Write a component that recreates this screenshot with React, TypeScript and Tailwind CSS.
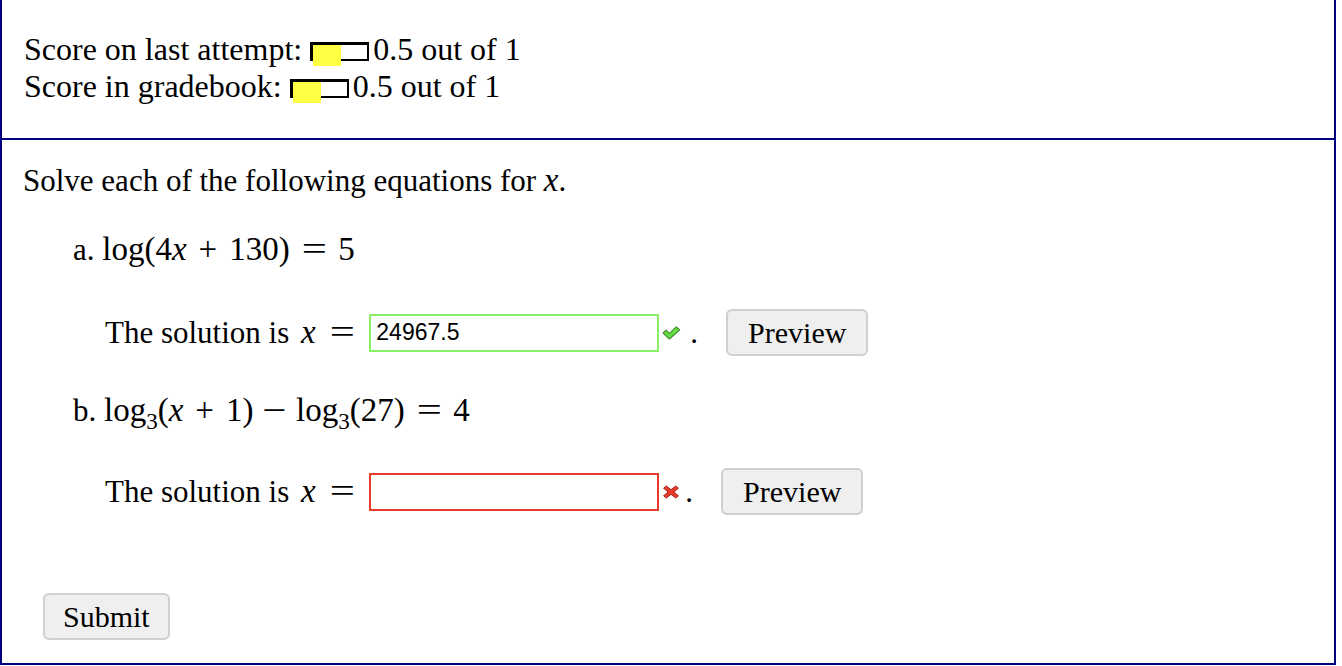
import React from "react"

function ScoreBar() {
  return (
    <span className="relative ml-[0px] mr-[4px] inline-block h-[19px] w-[59px] translate-y-[1px] border-2 border-black border-t-[3px] border-l-[3px] align-baseline">
      <span className="absolute left-0 top-0 h-[21px] w-[28px] bg-[#ffff44]" />
    </span>
  )
}

function CheckIcon() {
  return (
    <svg width="19" height="14" viewBox="0 0 18 13" className="inline-block">
      <path
        d="M1 6.5 L4 3.8 L7 6.8 L13.5 0.8 L16.8 3.6 L7 12.2 Z"
        fill="#66dd44"
        stroke="#3c8a2a"
        strokeWidth="1"
        strokeLinejoin="round"
      />
    </svg>
  )
}

function CrossIcon() {
  return (
    <svg width="18" height="14" viewBox="0 0 17 13" className="inline-block">
      <path
        d="M1.5 3 L4 0.8 L8.5 4.3 L13 0.8 L15.5 3 L11.2 6.5 L15.5 10 L13 12.2 L8.5 8.7 L4 12.2 L1.5 10 L5.8 6.5 Z"
        fill="#e83a2a"
        stroke="#9a2418"
        strokeWidth="0.9"
        strokeLinejoin="round"
      />
    </svg>
  )
}

function X() {
  return <span className="italic">x</span>
}

function Sub3() {
  return <span className="relative top-[8px] text-[23px]">3</span>
}

function AnswerRow({ value, ok }: { value: string; ok: boolean }) {
  return (
    <div className="flex items-center pl-[103px]">
      <span>
        The solution is{" "}
        <span className="ml-[4px] text-[33px]">
          <X />
        </span>
        <span className="ml-[17px] inline-block scale-x-[1.35] text-[33px]">=</span>
      </span>
      <input
        readOnly
        value={value}
        className={`ml-[18px] h-[38px] w-[290px] border-2 px-[5px] text-[23px] text-black outline-none ${
          ok ? "border-[#88ee66]" : "border-[#e8392b]"
        }`}
        style={{ fontFamily: '"Liberation Sans", Arial, sans-serif' }}
      />
      <span className="ml-[3px] flex items-center">{ok ? <CheckIcon /> : <CrossIcon />}</span>
      <span className={ok ? "ml-[9px]" : "ml-[5px]"}>.</span>
      <button className="ml-[28px] h-[47px] rounded-[6px] border-2 border-[#cfcfcf] bg-[#efefef] px-[20px] text-[30px] text-black">
        Preview
      </button>
    </div>
  )
}

export default function App() {
  return (
    <div
      className="h-[665px] w-[1336px] border-x-2 border-b-2 border-[#000080] bg-white text-[31px] text-black"
      style={{ fontFamily: '"Liberation Serif", "Times New Roman", serif' }}
    >
      <div className="h-[138px] pl-[22px] pt-[31px] text-[32px] leading-[37px]">
        <div>
          Score on last attempt:{" "}
          <ScoreBar />
          0.5 out of 1
        </div>
        <div>
          Score in gradebook:{" "}
          <ScoreBar />
          0.5 out of 1
        </div>
      </div>

      <div className="border-t-2 border-[#000080] leading-[36px]">
        <p className="pl-[21px] pt-[22px]">
          Solve each of the following equations for{" "}
          <span className="text-[33px]">
            <X />
          </span>
          .
        </p>

        <p className="pl-[71px] pt-[32px]">
          a. <span className="text-[33px]">
            log(4<X />
            <span className="mx-[12px]">+</span>130)
            <span className="mx-[15px] inline-block scale-x-[1.35]">=</span>5
          </span>
        </p>

        <div className="pt-[41px]">
          <AnswerRow value="24967.5" ok />
        </div>

        <p className="pl-[71px] pt-[36px]">
          b. <span className="text-[33px]">
            log<Sub3 />(<X />
            <span className="mx-[12px]">+</span>1)
            <span className="mx-[12px] inline-block scale-x-[1.3]">−</span>log<Sub3 />(27)
            <span className="mx-[15px] inline-block scale-x-[1.35]">=</span>4
          </span>
        </p>

        <div className="pt-[36px]">
          <AnswerRow value="" ok={false} />
        </div>

        <div className="pl-[41px] pt-[78px]">
          <button className="h-[47px] rounded-[6px] border-2 border-[#cfcfcf] bg-[#efefef] px-[18px] text-[30px] text-black">
            Submit
          </button>
        </div>
      </div>
    </div>
  )
}
